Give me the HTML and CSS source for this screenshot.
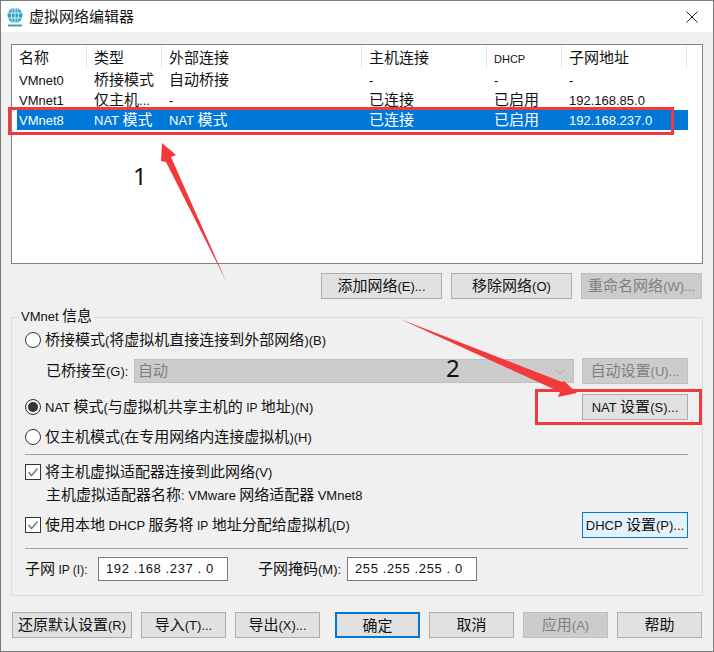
FILE: index.html
```html
<!DOCTYPE html>
<html lang="zh-CN">
<head>
    <meta charset="UTF-8">
    <title>虚拟网络编辑器</title>
    <link rel="stylesheet" href="styles.css">
</head>
<body>
    <div class="window">
        <div class="titlebar">
            <svg class="app-icon" width="24" height="24" viewBox="0 0 24 24">
                <circle cx="12" cy="10.5" r="7.5" fill="#2f9fc4"/>
                <g fill="none" stroke="#d6f0f7" stroke-width="1">
                    <ellipse cx="12" cy="10.5" rx="3.5" ry="7.5"/>
                    <path d="M5 8h14M5 13h14M12 3v15"/>
                </g>
                <path d="M5 20.5h14" stroke="#3fa98c" stroke-width="2"/>
            </svg>
            <span class="title">虚拟网络编辑器</span>
            <svg class="close" width="12" height="12" viewBox="0 0 12 12">
                <path d="M0.5 0.5l11 11M11.5 0.5l-11 11" stroke="#222" stroke-width="1" fill="none"/>
            </svg>
        </div>

        <div class="content">
            <div class="list">
                <div class="row head">
                    <div class="cell">名称</div>
                    <div class="cell">类型</div>
                    <div class="cell">外部连接</div>
                    <div class="cell">主机连接</div>
                    <div class="cell"><span class="en tiny">DHCP</span></div>
                    <div class="cell">子网地址</div>
                </div>
                <div class="row">
                    <div class="cell"><span class="en">VMnet0</span></div>
                    <div class="cell">桥接模式</div>
                    <div class="cell">自动桥接</div>
                    <div class="cell"><span class="en">-</span></div>
                    <div class="cell"><span class="en">-</span></div>
                    <div class="cell"><span class="en">-</span></div>
                </div>
                <div class="row">
                    <div class="cell"><span class="en">VMnet1</span></div>
                    <div class="cell">仅主机<span class="en">...</span></div>
                    <div class="cell"><span class="en">-</span></div>
                    <div class="cell">已连接</div>
                    <div class="cell">已启用</div>
                    <div class="cell"><span class="en">192.168.85.0</span></div>
                </div>
                <div class="row selected">
                    <div class="cell"><span class="en">VMnet8</span></div>
                    <div class="cell"><span class="en">NAT</span> 模式</div>
                    <div class="cell"><span class="en">NAT</span> 模式</div>
                    <div class="cell">已连接</div>
                    <div class="cell">已启用</div>
                    <div class="cell"><span class="en">192.168.237.0</span></div>
                </div>
            </div>

            <div class="list-actions">
                <button class="btn btn-wide">添加网络<span class="en">(E)...</span></button>
                <button class="btn btn-wide">移除网络<span class="en">(O)</span></button>
                <button class="btn btn-wide" disabled>重命名网络<span class="en">(W)...</span></button>
            </div>

            <fieldset class="group">
                <legend><span class="en">VMnet</span> 信息</legend>

                <div class="opt opt-first">
                    <span class="radio"></span>
                    <span class="txt">桥接模式<span class="en">(</span>将虚拟机直接连接到外部网络<span class="en">)(B)</span></span>
                </div>
                <div class="bridge-row">
                    <span class="txt bridge-label">已桥接至<span class="en">(G):</span></span>
                    <div class="select">
                        <span class="txt">自动</span>
                        <svg width="12" height="7" viewBox="0 0 12 7"><path d="M1 1l5 5 5-5" fill="none" stroke="#a8a8a8"/></svg>
                    </div>
                    <button class="btn btn-side" disabled>自动设置<span class="en">(U)...</span></button>
                </div>
                <div class="opt opt-nat">
                    <span class="radio on"></span>
                    <span class="txt grow"><span class="en">NAT</span> 模式<span class="en">(</span>与虚拟机共享主机的 <span class="en small">IP</span> 地址<span class="en">)(N)</span></span>
                    <button class="btn btn-side"><span class="en">NAT</span> 设置<span class="en">(S)...</span></button>
                </div>
                <div class="opt opt-host">
                    <span class="radio"></span>
                    <span class="txt">仅主机模式<span class="en">(</span>在专用网络内连接虚拟机<span class="en">)(H)</span></span>
                </div>

                <div class="sep sep-top"></div>

                <div class="opt opt-check">
                    <span class="check"><svg width="14" height="14" viewBox="0 0 14 14"><path d="M2.5 7l3 3.5 6-7" fill="none" stroke="#7a7a7a" stroke-width="1.5"/></svg></span>
                    <span class="txt">将主机虚拟适配器连接到此网络<span class="en">(V)</span></span>
                </div>
                <div class="adapter">主机虚拟适配器名称<span class="en">: VMware</span> 网络适配器 <span class="en">VMnet8</span></div>
                <div class="opt opt-dhcp">
                    <span class="check"><svg width="14" height="14" viewBox="0 0 14 14"><path d="M2.5 7l3 3.5 6-7" fill="none" stroke="#7a7a7a" stroke-width="1.5"/></svg></span>
                    <span class="txt grow">使用本地 <span class="en">DHCP</span> 服务将 <span class="en small">IP</span> 地址分配给虚拟机<span class="en">(D)</span></span>
                    <button class="btn btn-side btn-focus"><span class="en">DHCP</span> 设置<span class="en">(P)...</span></button>
                </div>

                <div class="sep sep-bottom"></div>

                <div class="ip-row">
                    <span class="txt ip-label">子网 <span class="en small">IP (I):</span></span>
                    <div class="ip-box">192 .168 .237 . 0</div>
                    <span class="txt ip-label mask-label">子网掩码<span class="en">(M):</span></span>
                    <div class="ip-box">255 .255 .255 . 0</div>
                </div>
            </fieldset>

            <div class="footer">
                <button class="btn btn-restore">还原默认设置<span class="en">(R)</span></button>
                <button class="btn btn-foot">导入<span class="en">(T)...</span></button>
                <button class="btn btn-foot">导出<span class="en">(X)...</span></button>
                <button class="btn btn-foot btn-default">确定</button>
                <button class="btn btn-foot">取消</button>
                <button class="btn btn-foot" disabled>应用<span class="en">(A)</span></button>
                <button class="btn btn-foot">帮助</button>
            </div>
        </div>

        <!-- red marks drawn on top of the screenshot -->
        <svg class="marks" width="714" height="652" viewBox="0 0 714 652">
            <rect x="9.5" y="108.5" width="663" height="25" fill="none" stroke="#f33a3a" stroke-width="3"/>
            <rect x="536.5" y="390.5" width="164" height="33" fill="none" stroke="#f33a3a" stroke-width="3"/>
            <polygon points="162,143 176,155 171,157 226,281 166,162 161,161" fill="#f33a3a"/>
            <polygon points="400,319 562,382 564,381 577,393 558,397 560,392" fill="#f33a3a"/>
        </svg>
        <span class="mark-num num-one">1</span>
        <span class="mark-num num-two">2</span>
    </div>
</body>
</html>
```

FILE: styles.css
```css
* {
    box-sizing: border-box;
}

body {
    margin: 0;
    font-family: "Noto Sans CJK SC", sans-serif;
    font-size: 15px;
    color: #111;
}

.en {
    font-family: "Liberation Sans", sans-serif;
    font-size: 13px;
}

.small {
    font-size: 12px;
}

.tiny {
    font-size: 11px;
}

/* the CJK font sits low in its line box, this lifts labels next to a control */
.txt {
    margin-bottom: 4px;
}

.window {
    position: relative;
    width: 714px;
    height: 652px;
    background: #f0f0f0;
    border: 1px solid #7a7a7a;
    overflow: hidden;
}

.titlebar {
    display: flex;
    align-items: center;
    height: 31px;
    padding: 0 15px 0 2px;
    background: #fff;
}

.title {
    flex: 1;
    margin: 0 0 2px 2px;
}

.content {
    padding: 12px 10px 0;
}

.list {
    height: 220px;
    background: #fff;
    border: 1px solid #828282;
}

.row {
    display: grid;
    grid-template-columns: 75px 75px 200px 125px 75px 125px;
    height: 20px;
    white-space: nowrap;
}

.cell {
    height: 20px;
    line-height: 17px;
    padding-left: 7px;
}

.head {
    height: 25px;
}

.head .cell {
    height: 24px;
    line-height: 24px;
    border-right: 1px solid #e5e5e5;
}

.selected {
    margin-left: 5px;
    width: 671px;
    grid-template-columns: 70px 75px 200px 125px 75px 125px;
    background: #0078d7;
    color: #fff;
}

.selected .cell:first-child {
    padding-left: 2px;
}

.btn {
    height: 26px;
    padding: 0 0 4px;
    background: #e1e1e1;
    border: 1px solid #adadad;
    border-radius: 0;
    color: #111;
    font: inherit;
    white-space: nowrap;
}

.btn:disabled {
    background: #ccc;
    border-color: #bfbfbf;
    color: #808080;
}

.btn-wide {
    width: 121px;
}

.btn-side {
    flex: none;
    width: 106px;
}

.btn-focus {
    background: #e5f1fb;
    border-color: #0078d7;
}

.btn-default {
    border: 2px solid #0078d7;
}

.list-actions {
    display: flex;
    justify-content: flex-end;
    gap: 9px;
    margin-top: 9px;
    padding-right: 1px;
}

.group {
    margin: 8px 0 0;
    height: 289px;
    min-width: 0;
    width: 692px;
    padding: 0 14px 0 13px;
    border: 1px solid #dcdcdc;
    border-radius: 0;
}

.group legend {
    height: 20px;
    line-height: 16px;
    margin-left: -6px;
    padding: 0 2px;
}

.opt {
    display: flex;
    align-items: center;
    height: 26px;
    white-space: nowrap;
}

.grow {
    flex: 1;
}

.radio {
    flex: none;
    display: flex;
    align-items: center;
    justify-content: center;
    width: 16px;
    height: 16px;
    margin-right: 4px;
    background: #fff;
    border: 1px solid #333;
    border-radius: 50%;
}

.radio.on {
    background: #f0f0f0;
}

.radio.on::after {
    content: "";
    width: 10px;
    height: 10px;
    background: #333;
    border-radius: 50%;
}

.check {
    flex: none;
    display: flex;
    align-items: center;
    justify-content: center;
    width: 16px;
    height: 16px;
    margin-right: 4px;
    background: #fff;
    border: 1px solid #333;
}

.bridge-row {
    display: flex;
    align-items: center;
    height: 26px;
    margin-top: 5px;
    padding-left: 21px;
}

.bridge-label {
    width: 88px;
    white-space: nowrap;
}

.select {
    display: flex;
    align-items: center;
    justify-content: space-between;
    width: 440px;
    height: 24px;
    margin-right: 8px;
    padding: 0 7px 0 3px;
    background: #ccc;
    border: 1px solid #bfbfbf;
    color: #808080;
}

.opt-nat {
    margin-top: 10px;
}

.opt-host {
    margin-top: 4px;
}

.sep {
    height: 1px;
    background: #a0a0a0;
}

.sep-top {
    margin-top: 4px;
}

.opt-check {
    margin-top: 4px;
}

.adapter {
    height: 20px;
    line-height: 18px;
    padding-left: 21px;
    white-space: nowrap;
}

.opt-dhcp {
    margin-top: 7px;
}

.sep-bottom {
    margin-top: 10px;
}

.ip-row {
    display: flex;
    align-items: center;
    height: 24px;
    margin-top: 8px;
}

.ip-label {
    width: 73px;
    white-space: nowrap;
}

.mask-label {
    width: 89px;
    margin-left: 30px;
}

.ip-box {
    width: 130px;
    height: 24px;
    line-height: 22px;
    padding-left: 7px;
    background: #fff;
    border: 1px solid #7a7a7a;
    font-family: "Liberation Sans", sans-serif;
    font-size: 13px;
    letter-spacing: 0.6px;
    white-space: pre;
}

.footer {
    display: flex;
    margin-top: 16px;
    padding-left: 1px;
    gap: 9px;
}

.btn-restore {
    width: 120px;
}

.btn-foot {
    width: 85px;
}

.btn-default {
    margin-left: 6px;
}

.marks {
    position: absolute;
    left: -1px;
    top: -1px;
    pointer-events: none;
}

.mark-num {
    position: absolute;
    font-family: "Noto Sans", sans-serif;
    font-size: 24px;
    line-height: 28px;
    color: #111;
}

.num-one {
    left: 132px;
    top: 161px;
}

.num-two {
    left: 445px;
    top: 353px;
}
```
